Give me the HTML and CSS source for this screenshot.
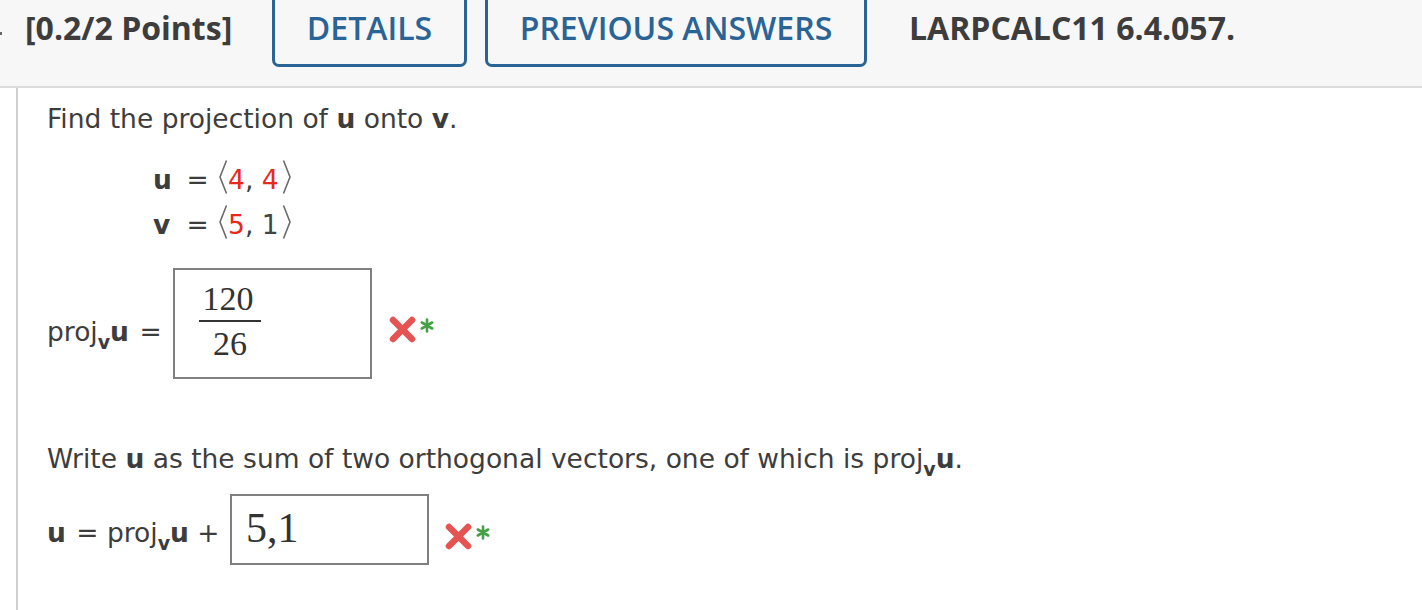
FILE: index.html
```html
<!DOCTYPE html>
<html>
<head>
<meta charset="utf-8">
<link rel="stylesheet" href="styles.css">
</head>
<body>
<div class="header">
  <span class="dash"></span>
  <span class="points">[0.2/2 Points]</span>
  <span class="btn btn-details">DETAILS</span>
  <span class="btn btn-prev">PREVIOUS ANSWERS</span>
  <span class="ref">LARPCALC11 6.4.057.</span>
</div>
<div class="content">
  <p class="q">Find the projection of <b>u</b> onto <b>v</b>.</p>
  <div class="vecs">
    <div class="vrow"><b class="vname">u</b><span class="eq">=</span><svg class="ang" width="10" height="34" viewBox="0 0 10 34"><polyline points="8.5,0.5 2,17 8.5,33.5" fill="none" stroke="#6a6a6a" stroke-width="1.6"/></svg><span class="red">4</span>, <span class="red">4</span><svg class="ang angr" width="10" height="34" viewBox="0 0 10 34"><polyline points="1.5,0.5 8,17 1.5,33.5" fill="none" stroke="#6a6a6a" stroke-width="1.6"/></svg></div>
    <div class="vrow"><b class="vname">v</b><span class="eq">=</span><svg class="ang" width="10" height="34" viewBox="0 0 10 34"><polyline points="8.5,0.5 2,17 8.5,33.5" fill="none" stroke="#6a6a6a" stroke-width="1.6"/></svg><span class="red">5</span>, <span class="dark">1</span><svg class="ang angr" width="10" height="34" viewBox="0 0 10 34"><polyline points="1.5,0.5 8,17 1.5,33.5" fill="none" stroke="#6a6a6a" stroke-width="1.6"/></svg></div>
  </div>
  <div class="answer a1">
    <span class="lbl lbl1">proj<sub>v</sub><b>u</b> <span class="eq2">=</span></span>
    <div class="box box1">
      <div class="frac"><span class="num">120</span><span class="den">26</span></div>
    </div>
    <svg class="mark mark1" width="46" height="30" viewBox="0 0 46 30"><path d="M4 4 L23 23 M23 4 L4 23" stroke="#e65353" stroke-width="6.5" stroke-linecap="round"/><path d="M38 3.5 V15.5 M32.8 6.5 L43.2 12.5 M43.2 6.5 L32.8 12.5" stroke="#46a046" stroke-width="2.6" stroke-linecap="round"/></svg>
  </div>
  <p class="q q2">Write <b>u</b> as the sum of two orthogonal vectors, one of which is proj<sub>v</sub><b>u</b>.</p>
  <div class="answer a2">
    <span class="lbl lbl2"><b>u</b> <span class="eq2">=</span> proj<sub>v</sub><b>u</b> +</span>
    <div class="box box2"><span class="val">5,1</span></div>
    <svg class="mark mark2" width="46" height="30" viewBox="0 0 46 30"><path d="M4 4 L23 23 M23 4 L4 23" stroke="#e65353" stroke-width="6.5" stroke-linecap="round"/><path d="M38 3.5 V15.5 M32.8 6.5 L43.2 12.5 M43.2 6.5 L32.8 12.5" stroke="#46a046" stroke-width="2.6" stroke-linecap="round"/></svg>
  </div>
</div>
</body>
</html>
```
FILE: styles.css
```css
html, body { margin: 0; padding: 0; background: #fff; }
body { width: 1422px; height: 610px; overflow: hidden; }
.header {
  height: 86px;
  background: #f7f7f7;
  border-bottom: 2px solid #dddddd;
  display: flex;
  align-items: flex-start;
  font-family: "Open Sans", sans-serif;
  font-weight: 700;
  color: #3d3d3d;
  font-size: 32px;
  line-height: 44px;
}
.dash { width: 2px; height: 3px; background: #666; margin-top: 32px; flex: none; }
.points { margin-left: 23px; width: 247px; margin-top: 6px; flex: none; white-space: nowrap; }
.btn {
  box-sizing: border-box;
  flex: none;
  margin-top: -10px;
  height: 77px;
  border: 3px solid #2a6496;
  border-radius: 7px;
  color: #2a6496;
  font-weight: 600;
  text-align: center;
  padding-top: 13px;
  background: #f7f7f7;
  white-space: nowrap;
}
.btn-details { width: 195px; }
.btn-prev { width: 382px; margin-left: 18px; }
.ref { margin-left: 42px; margin-top: 6px; white-space: nowrap; }

.content {
  margin-left: 16px;
  border-left: 2px solid #cfcfcf;
  height: 522px;
  padding-left: 29px;
  padding-top: 15px;
  box-sizing: border-box;
  font-family: "DejaVu Sans", Verdana, sans-serif;
  color: #3d3d3d;
  font-size: 26.5px;
  line-height: 32px;
}
.q { margin: 0; white-space: nowrap; }
.q b, .lbl b { font-weight: 700; }
.vecs { margin-left: 106px; margin-top: 21.5px; }
.vrow { height: 45px; line-height: 45px; white-space: nowrap; }
.vname { display: inline-block; width: 26px; }
.eq { display: inline-block; width: 37px; text-align: center; }
.ang { vertical-align: -5px; margin-left: 2px; }
.angr { margin-left: 3px; margin-right: 0; }
.red { color: #e8291c; }
.dark { color: #444; }
.answer { display: flex; align-items: flex-start; }
.a1 { margin-top: 21px; }
.lbl { white-space: nowrap; flex: none; }
.lbl1 { width: 126px; margin-top: 48px; }
.lbl2 { width: 183px; margin-top: 23px; }
sub { font-size: 19px; font-weight: 700; vertical-align: -8px; line-height: 0; }
.eq2 { margin-left: 2px; }
.box { box-sizing: border-box; border: 2px solid #808080; background: #fff; flex: none; }
.box1 { width: 199px; height: 111px; padding-left: 24px; }
.frac {
  width: 62px;
  margin-top: 12.5px;
  display: flex;
  flex-direction: column;
  align-items: center;
  font-family: "Liberation Serif", serif;
  font-size: 34px;
  line-height: 34px;
  color: #333;
}
.num { align-self: stretch; text-align: center; padding-bottom: 3.5px; border-bottom: 2px solid #333; padding-right: 4px; }
.den { padding-top: 5.5px; }
.mark { flex: none; display: block; }
.mark1 { margin-left: 17px; margin-top: 48px; }
.q2 { margin-top: 64px; }
.a2 { margin-top: 19px; }
.box2 { width: 199px; height: 71px; padding-left: 14px; padding-top: 11px; }
.val { display: block; font-family: "Liberation Serif", serif; font-size: 42px; line-height: 42px; color: #333; }
.mark2 { margin-left: 16px; margin-top: 29px; }
```
